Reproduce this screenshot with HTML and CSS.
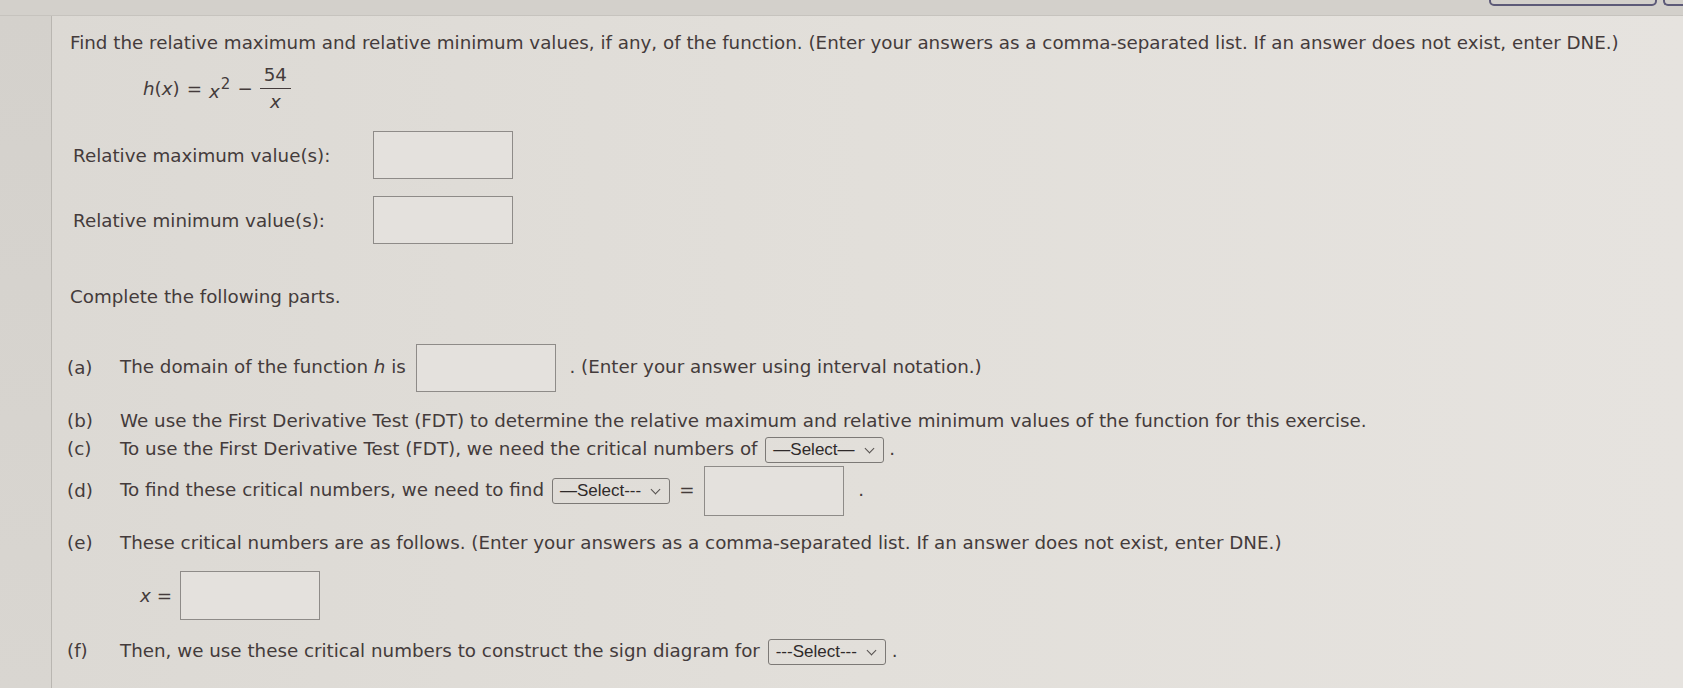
FILE: index.html
```html
<!DOCTYPE html>
<html lang="en">
<head>
    <meta charset="UTF-8">
    <title>Relative Extrema</title>
    <link rel="stylesheet" href="styles.css">
</head>
<body>
    <div class="topbar">
        <div class="top-btn"></div>
        <div class="top-btn short"></div>
    </div>

    <div class="page">
        <div class="gutter"></div>
        <div class="panel">
            <p class="prompt">Find the relative maximum and relative minimum values, if any, of the function. (Enter your answers as a comma-separated list. If an answer does not exist, enter DNE.)</p>

            <div class="formula">
                <span><i>h</i>(<i>x</i>)</span>
                <span class="op">=</span>
                <span><i>x</i><sup>2</sup></span>
                <span class="op">&minus;</span>
                <span class="frac">
                    <span class="num">54</span>
                    <span class="den"><i>x</i></span>
                </span>
            </div>

            <div class="answer-row first">
                <span class="answer-label">Relative maximum value(s):</span>
                <span class="input-box"></span>
            </div>
            <div class="answer-row">
                <span class="answer-label">Relative minimum value(s):</span>
                <span class="input-box"></span>
            </div>

            <p class="complete">Complete the following parts.</p>

            <div class="part part-a">
                <span class="part-tag">(a)</span>
                <span class="part-text">The domain of the function <i>h</i> is <span class="input-box inline"></span> . (Enter your answer using interval notation.)</span>
            </div>
            <div class="part part-b">
                <span class="part-tag">(b)</span>
                <span class="part-text">We use the First Derivative Test (FDT) to determine the relative maximum and relative minimum values of the function for this exercise.</span>
            </div>
            <div class="part part-c">
                <span class="part-tag">(c)</span>
                <span class="part-text">To use the First Derivative Test (FDT), we need the critical numbers of <span class="select">&mdash;Select&mdash; <span class="chev"></span></span> .</span>
            </div>
            <div class="part part-d">
                <span class="part-tag">(d)</span>
                <span class="part-text">To find these critical numbers, we need to find <span class="select">&mdash;Select--- <span class="chev"></span></span><span class="eq">=</span><span class="input-box inline"></span> .</span>
            </div>
            <div class="part part-e">
                <span class="part-tag">(e)</span>
                <span class="part-text">These critical numbers are as follows. (Enter your answers as a comma-separated list. If an answer does not exist, enter DNE.)</span>
            </div>
            <div class="x-row">
                <span><i>x</i> =</span>
                <span class="input-box"></span>
            </div>
            <div class="part part-f">
                <span class="part-tag">(f)</span>
                <span class="part-text">Then, we use these critical numbers to construct the sign diagram for <span class="select">---Select--- <span class="chev"></span></span> .</span>
            </div>
        </div>
    </div>
</body>
</html>
```

FILE: styles.css
```css
* {
    margin: 0;
    padding: 0;
    box-sizing: border-box;
}

body {
    font-family: "DejaVu Sans", Verdana, sans-serif;
    font-size: 18.3px;
    color: #443b3b;
    background: #d6d3ce;
    width: 1683px;
    height: 688px;
    overflow: hidden;
}

.topbar {
    height: 16px;
    background: #d3d0cb;
    border-bottom: 1px solid #c6c3be;
    display: flex;
    justify-content: flex-end;
    gap: 6px;
}

.top-btn {
    width: 168px;
    height: 10px;
    margin-top: -4px;
    border: 2px solid #5d5a78;
    border-radius: 0 0 5px 5px;
}

.top-btn.short {
    width: 20px;
    border-right: none;
    border-radius: 0 0 0 5px;
}

.page {
    display: flex;
    height: 672px;
}

.gutter {
    width: 51px;
    background: linear-gradient(180deg, #d4d1cc, #d9d6d1);
}

.panel {
    flex: 1;
    border-left: 1px solid #b9b6b1;
    background: linear-gradient(90deg, #dcd9d4 0%, #e2dfda 50%, #e6e3df 100%);
    padding: 17px 0 0 18px;
}

.prompt {
    line-height: 20px;
    white-space: nowrap;
}

.formula {
    display: flex;
    align-items: center;
    margin: 10px 0 0 73px;
    height: 50px;
}

.formula .op {
    margin: 0 7px;
}

.formula sup {
    font-size: 15px;
    vertical-align: 9px;
    margin-left: 1px;
}

.frac {
    display: inline-flex;
    flex-direction: column;
    align-items: center;
    line-height: 22px;
}

.frac .num {
    border-bottom: 1px solid #443b3b;
    padding: 0 4px 2px;
}

.frac .den {
    padding-top: 2px;
}

.answer-row {
    display: flex;
    align-items: center;
    height: 48px;
    margin-top: 17px;
    padding-left: 3px;
}

.answer-row.first {
    margin-top: 18px;
}

.answer-label {
    width: 300px;
}

.input-box {
    display: inline-block;
    width: 140px;
    height: 48px;
    border: 1px solid #8e8b88;
    background: #e4e1dd;
    vertical-align: middle;
}

.input-box.inline {
    margin: 0 8px 0 4px;
}

.complete {
    margin-top: 43px;
    line-height: 20px;
}

.part {
    display: flex;
    align-items: center;
    line-height: 28px;
}

.part-tag {
    width: 53px;
    margin-left: -3px;
}

.part-text {
    white-space: nowrap;
}

.part-a {
    margin-top: 36px;
    height: 49px;
}

.part-b {
    margin-top: 15px;
}

.part-d {
    margin-top: 3px;
    height: 50px;
}

.part-d .input-box {
    height: 50px;
    margin-left: 0;
}

.eq {
    margin: 0 10px 0 9px;
}

.part-e {
    margin-top: 13px;
}

.part-f {
    margin-top: 17px;
}

.x-row {
    display: flex;
    align-items: center;
    gap: 8px;
    margin: 14px 0 0 70px;
    height: 49px;
}

.x-row .input-box {
    height: 49px;
}

.select {
    display: inline-flex;
    align-items: center;
    gap: 11px;
    height: 26px;
    padding: 0 8px 0 7px;
    margin-left: 2px;
    border: 1px solid #7c7976;
    border-radius: 3px;
    font-family: "Liberation Sans", Arial, sans-serif;
    font-size: 17px;
    color: #2f2a2a;
    vertical-align: middle;
}

.chev {
    width: 7px;
    height: 7px;
    border-right: 1px solid #55504e;
    border-bottom: 1px solid #55504e;
    transform: rotate(45deg);
    margin: -4px 2px 0 0;
}
```
